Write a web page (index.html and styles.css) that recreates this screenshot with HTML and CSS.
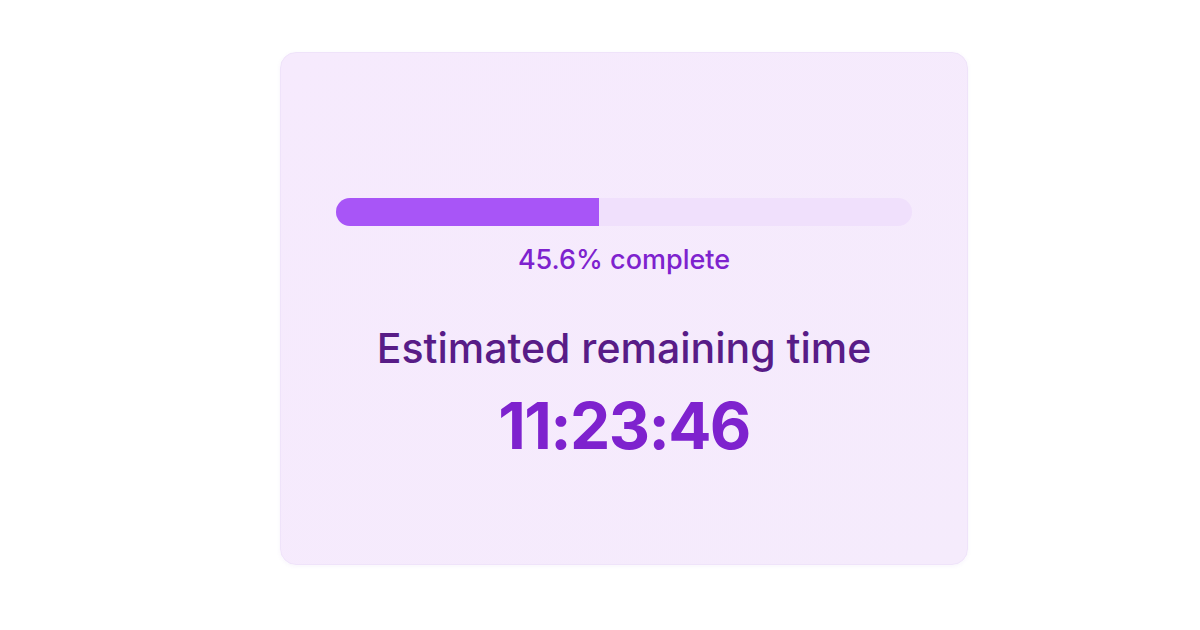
FILE: index.html
```html
<!DOCTYPE html>
<html lang="en">
<head>
    <meta charset="UTF-8">
    <meta name="viewport" content="width=device-width, initial-scale=1.0">
    <title>Progress</title>
    <link rel="stylesheet" href="styles.css">
</head>
<body>

    <div class="page">
        <div class="card">
            <div class="progress">
                <div class="progress-fill" style="width: 45.6%"></div>
            </div>
            <div class="percent">45.6% complete</div>
            <div class="label">Estimated remaining time</div>
            <div class="time">11:23:46</div>
        </div>
    </div>

</body>
</html>
```

FILE: styles.css
```css
/* Basic Reset */
* {
    margin: 0;
    padding: 0;
    box-sizing: border-box;
    font-family: Inter, "Noto Sans", sans-serif;
}

body {
    background: #fff;
    width: 1200px;
    height: 630px;
    overflow: hidden;
}

.page {
    padding: 52px 0 0 280px;
}

.card {
    width: 688px;
    height: 513px;
    padding: 145px 55px 0;
    background: linear-gradient(135deg, #f6eafd, #f5ebfc);
    border: 1px solid #efe3fa;
    border-radius: 16px;
    box-shadow: 0 1px 4px rgba(120, 60, 180, 0.06);
    display: flex;
    flex-direction: column;
    align-items: center;
}

.progress {
    width: 100%;
    height: 28px;
    background: #f0e0fc;
    border-radius: 14px;
    overflow: hidden;
}

.progress-fill {
    height: 100%;
    background: #a855f7;
}

.percent {
    margin-top: 20px;
    font-size: 27px;
    font-weight: 500;
    line-height: 1;
    color: #7e22ce;
}

.label {
    margin-top: 55px;
    font-size: 41px;
    font-weight: 500;
    line-height: 1;
    color: #581c87;
}

.time {
    margin-top: 25px;
    font-size: 64px;
    font-weight: 700;
    line-height: 1;
    letter-spacing: -0.025em;
    color: #7e22ce;
}
```
